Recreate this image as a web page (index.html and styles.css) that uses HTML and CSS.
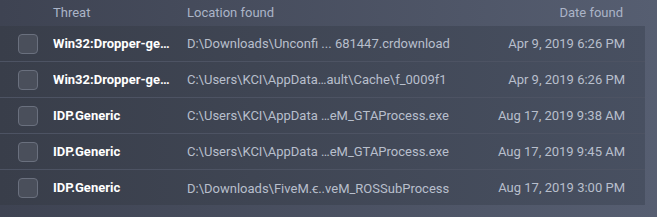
FILE: index.html
```html
<!DOCTYPE html>
<html>
<head>
<meta charset="utf-8">
<link rel="stylesheet" href="styles.css">
</head>
<body>
<div class="panel">
  <div class="head">
    <span></span>
    <span class="h">Threat</span>
    <span class="h">Location found</span>
    <span class="h date">Date found</span>
  </div>
  <div class="rows">
    <div class="row">
      <span class="cb"><i></i></span>
      <span class="name">Win32:Dropper-ge…</span>
      <span class="loc">D:\Downloads\Unconfi ... 681447.crdownload</span>
      <span class="date">Apr 9, 2019 6:26 PM</span>
    </div>
    <div class="row">
      <span class="cb"><i></i></span>
      <span class="name">Win32:Dropper-ge…</span>
      <span class="loc">C:\Users\KCI\AppData…ault\Cache\f_0009f1</span>
      <span class="date">Apr 9, 2019 6:26 PM</span>
    </div>
    <div class="row">
      <span class="cb"><i></i></span>
      <span class="name">IDP.Generic</span>
      <span class="loc">C:\Users\KCI\AppData …eM_GTAProcess.exe</span>
      <span class="date">Aug 17, 2019 9:38 AM</span>
    </div>
    <div class="row">
      <span class="cb"><i></i></span>
      <span class="name">IDP.Generic</span>
      <span class="loc">C:\Users\KCI\AppData …eM_GTAProcess.exe</span>
      <span class="date">Aug 17, 2019 9:45 AM</span>
    </div>
    <div class="row">
      <span class="cb"><i></i></span>
      <span class="name">IDP.Generic</span>
      <span class="loc">D:\Downloads\FiveM.ꞓ..veM_ROSSubProcess</span>
      <span class="date">Aug 17, 2019 3:00 PM</span>
    </div>
  </div>
</div>
</body>
</html>
```
FILE: styles.css
```css
html, body {
  margin: 0;
  padding: 0;
}
body {
  width: 657px;
  height: 217px;
  overflow: hidden;
  background: linear-gradient(to right, #3e4352, #565e71);
  font-family: Roboto, "Liberation Sans", sans-serif;
  font-size: 13px;
}
.panel {
  width: 645px;
}
.head, .row {
  display: grid;
  grid-template-columns: 53px 134px 1fr auto;
  align-items: center;
}
.head {
  height: 26px;
  padding-right: 22px;
}
.h {
  color: #abb4c7;
  position: relative;
  top: -1px;
}
.rows {
  background: linear-gradient(to right, #393e4a, #485061);
}
.row {
  height: 35px;
  border-bottom: 1px solid #4d5363;
  padding-right: 20px;
}
.row:last-child {
  border-bottom: none;
  height: 35px;
}
.cb {
  display: flex;
  padding-left: 18px;
}
.cb i {
  display: block;
  width: 18px;
  height: 18px;
  border: 1px solid #6a707e;
  border-radius: 4px;
  background: #4a4f5b;
}
.name {
  color: #ffffff;
  font-weight: bold;
  white-space: nowrap;
  overflow: hidden;
}
.loc {
  color: #b8bfcc;
  white-space: nowrap;
  overflow: hidden;
}
.date {
  color: #b8bfcc;
  text-align: right;
  white-space: nowrap;
}
.h.date {
  color: #abb4c7;
}
```
